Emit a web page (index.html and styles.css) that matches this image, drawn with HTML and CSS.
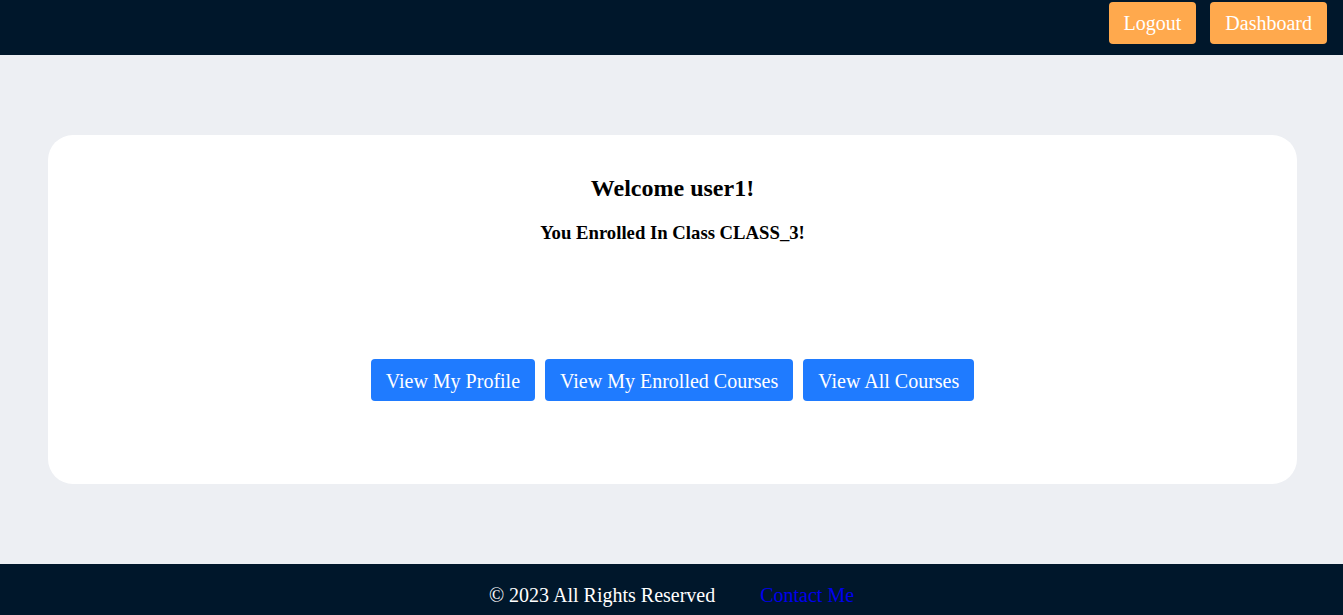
FILE: index.html
```html
<!DOCTYPE html>
<html lang="en">
<head>
<meta charset="utf-8">
<title>Welcome</title>
<link rel="stylesheet" href="styles.css">
</head>
<body>
<header class="topbar">
  <button class="nav-btn">Logout</button>
  <button class="nav-btn">Dashboard</button>
</header>
<main class="content">
  <section class="card">
    <h2 class="title">Welcome user1!</h2>
    <h3 class="subtitle">You Enrolled In Class CLASS_3!</h3>
    <div class="actions">
      <button class="action-btn">View My Profile</button>
      <button class="action-btn">View My Enrolled Courses</button>
      <button class="action-btn">View All Courses</button>
    </div>
  </section>
</main>
<footer class="footer">
  <span class="copy">© 2023 All Rights Reserved</span>
  <a class="contact" href="#">Contact Me</a>
</footer>
</body>
</html>
```

FILE: styles.css
```css
html, body {
  margin: 0;
  padding: 0;
}
body {
  font-family: "Liberation Serif", "Times New Roman", serif;
  background: #edeff3;
  color: #000;
}
.topbar {
  height: 55px;
  box-sizing: border-box;
  background: #00172b;
  display: flex;
  justify-content: flex-end;
  align-items: flex-start;
  gap: 14px;
  padding: 2px 16px 0 0;
}
.nav-btn {
  font-family: "Liberation Serif", "Times New Roman", serif;
  font-size: 20px;
  line-height: 23px;
  height: 42px;
  padding: 0 15px;
  border: none;
  border-radius: 4px;
  background: #ffa94d;
  color: #fff;
  cursor: pointer;
}
.content {
  padding: 80px 0;
}
.card {
  width: 1249px;
  box-sizing: border-box;
  margin: 0 auto 0 48px;
  background: #fff;
  border-radius: 25px;
  padding: 20px;
  text-align: center;
}
.title {
  font-size: 24px;
  font-weight: bold;
  margin: 19.92px 0;
}
.subtitle {
  font-size: 18.72px;
  font-weight: bold;
  margin: 18.72px 0 0;
}
.actions {
  display: flex;
  justify-content: center;
  gap: 10px;
  margin: 115px 0 63px;
}
.action-btn {
  font-family: "Liberation Serif", "Times New Roman", serif;
  font-size: 20px;
  line-height: 23px;
  height: 42px;
  padding: 3px 15px 0;
  border: none;
  border-radius: 4px;
  background: #1f7bff;
  color: #fff;
  cursor: pointer;
}
.footer {
  background: #00172b;
  display: flex;
  justify-content: center;
  gap: 45px;
  padding: 20px 0;
  font-size: 20px;
  line-height: 23px;
  color: #fff;
}
.contact {
  color: #0000ee;
  text-decoration: none;
}
```
